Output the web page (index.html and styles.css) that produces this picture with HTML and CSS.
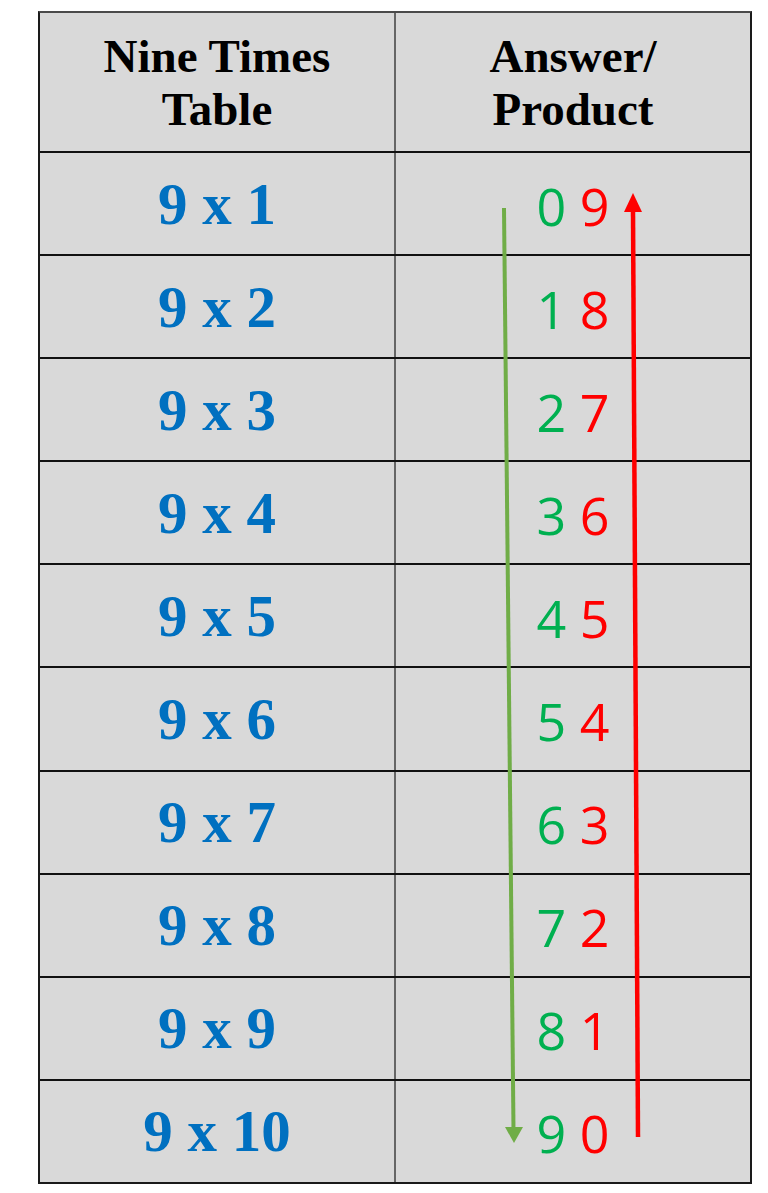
FILE: index.html
```html
<!DOCTYPE html>
<html>
<head>
<meta charset="utf-8">
<link rel="stylesheet" href="styles.css">
</head>
<body>
<div class="page">
  <div class="table">
    <div class="row head">
      <div class="cell left"><span class="h">Nine Times<br>Table</span></div>
      <div class="cell right"><span class="h">Answer/<br>Product</span></div>
    </div>
    <div class="row"><div class="cell left"><span class="eq">9 x 1</span></div><div class="cell right"><span class="ans"><span class="g">0</span> <span class="r">9</span></span></div></div>
    <div class="row"><div class="cell left"><span class="eq">9 x 2</span></div><div class="cell right"><span class="ans"><span class="g">1</span> <span class="r">8</span></span></div></div>
    <div class="row"><div class="cell left"><span class="eq">9 x 3</span></div><div class="cell right"><span class="ans"><span class="g">2</span> <span class="r">7</span></span></div></div>
    <div class="row"><div class="cell left"><span class="eq">9 x 4</span></div><div class="cell right"><span class="ans"><span class="g">3</span> <span class="r">6</span></span></div></div>
    <div class="row"><div class="cell left"><span class="eq">9 x 5</span></div><div class="cell right"><span class="ans"><span class="g">4</span> <span class="r">5</span></span></div></div>
    <div class="row"><div class="cell left"><span class="eq">9 x 6</span></div><div class="cell right"><span class="ans"><span class="g">5</span> <span class="r">4</span></span></div></div>
    <div class="row"><div class="cell left"><span class="eq">9 x 7</span></div><div class="cell right"><span class="ans"><span class="g">6</span> <span class="r">3</span></span></div></div>
    <div class="row"><div class="cell left"><span class="eq">9 x 8</span></div><div class="cell right"><span class="ans"><span class="g">7</span> <span class="r">2</span></span></div></div>
    <div class="row"><div class="cell left"><span class="eq">9 x 9</span></div><div class="cell right"><span class="ans"><span class="g">8</span> <span class="r">1</span></span></div></div>
    <div class="row last"><div class="cell left"><span class="eq">9 x 10</span></div><div class="cell right"><span class="ans"><span class="g">9</span> <span class="r">0</span></span></div></div>
  </div>
  <svg class="arrows" width="768" height="1193" viewBox="0 0 768 1193" xmlns="http://www.w3.org/2000/svg">
    <line x1="504" y1="208" x2="513.5" y2="1129" stroke="#70AD47" stroke-width="4"/>
    <polygon points="505,1127 523,1127 514,1143" fill="#70AD47"/>
    <line x1="638" y1="1137" x2="633" y2="210" stroke="#FF0000" stroke-width="4.5"/>
    <polygon points="624,212 642,212 633,193" fill="#FF0000"/>
  </svg>
</div>
</body>
</html>
```

FILE: styles.css
```css
html, body {
  margin: 0;
  padding: 0;
  background: #ffffff;
}

.page {
  position: relative;
  width: 768px;
  height: 1193px;
  padding: 11px 0 0 38px;
  box-sizing: border-box;
}

.table {
  width: 714px;
  border: 2px solid #1a1a1a;
  border-top-color: #4a4a4a;
  background: #d9d9d9;
  box-sizing: border-box;
}

.row {
  display: grid;
  grid-template-columns: 356px 1fr;
  height: 101.1px;
  border-bottom: 2px solid #111111;
}

.row.head {
  height: 138px;
}

.row.last {
  border-bottom: none;
  height: 101px;
}

.cell {
  display: flex;
  align-items: center;
  justify-content: center;
  text-align: center;
}

.cell.left {
  border-right: 2px solid #666666;
}

.h {
  font-family: "Liberation Serif", "Times New Roman", serif;
  font-weight: bold;
  font-size: 47px;
  line-height: 53px;
  color: #000000;
  position: relative;
  top: 1px;
}

.eq {
  font-family: "Liberation Serif", "Times New Roman", serif;
  font-weight: bold;
  font-size: 59px;
  line-height: 70px;
  color: #0070C0;
  white-space: pre;
}

.ans {
  font-family: "Open Sans", "Noto Sans", sans-serif;
  font-size: 52px;
  line-height: 70px;
  white-space: pre;
  position: relative;
  top: 2px;
}

.g {
  color: #00B050;
}

.r {
  color: #FF0000;
}

.arrows {
  position: absolute;
  top: 0;
  left: 0;
  pointer-events: none;
}
```
